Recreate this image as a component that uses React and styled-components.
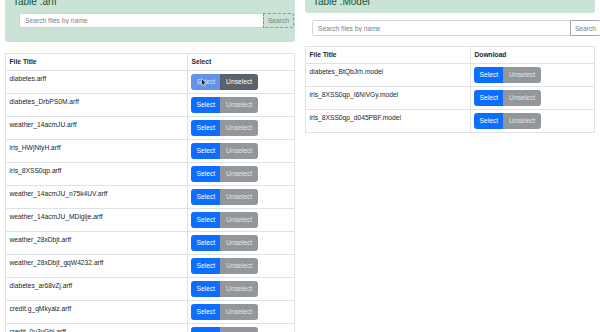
import React from "react";
import styled, { createGlobalStyle } from "styled-components";

const arffFiles = [
  "diabetes.arff",
  "diabetes_DrbPS0M.arff",
  "weather_14acmJU.arff",
  "iris_HWjNtyH.arff",
  "iris_8XSS0qp.arff",
  "weather_14acmJU_n75k4UV.arff",
  "weather_14acmJU_MDiglje.arff",
  "weather_28xDbjt.arff",
  "weather_28xDbjt_gqW4232.arff",
  "diabetes_ar68vZj.arff",
  "credit.g_qMkyalz.arff",
  "credit_0u3vGbj.arff",
  "credit_Kf2sLpa.arff",
];

const modelFiles = [
  "diabetes_BtQbJrh.model",
  "iris_8XSS0qp_I6NiVGy.model",
  "iris_8XSS0qp_d045PBF.model",
];

const Cursor = () => (
  <CursorIcon width="6" height="9" viewBox="0 0 6 9">
    <path d="M0.5 0.5 L0.5 7.5 L2 6 L3.2 8.5 L4.2 8 L3 5.6 L5.3 5.6 Z" fill="#111" stroke="#fff" strokeWidth="0.6" />
  </CursorIcon>
);

const SelectButtons = ({ selected }) => (
  <ButtonGroup>
    <Btn $variant="primary" disabled={selected}>
      Select
    </Btn>
    <Btn $variant="secondary" disabled={!selected}>
      Unselect
    </Btn>
    {selected && <Cursor />}
  </ButtonGroup>
);

const FileTable = ({ files, action, firstWidth, selectedIndex }) => (
  <Table>
    <colgroup>
      <col style={{ width: firstWidth }} />
      <col />
    </colgroup>
    <thead>
      <tr>
        <Th>File Title</Th>
        <Th>{action}</Th>
      </tr>
    </thead>
    <tbody>
      {files.map((f, i) => (
        <tr key={f}>
          <Td>{f}</Td>
          <Td $buttons>
            <SelectButtons selected={i === selectedIndex} />
          </Td>
        </tr>
      ))}
    </tbody>
  </Table>
);

const App = () => {
  return (
    <>
      <GlobalStyle />
      <Page>
        <Column>
          <Banner $pad="4px 1px 14px 8px">
            <Title>Table .arff</Title>
            <SearchGroup $ml="6px" $mt="5px" $h="15px">
              <SearchInput placeholder="Search files by name" />
              <SearchButton $dashed>Search</SearchButton>
            </SearchGroup>
          </Banner>
          <TableWrap $mt="11px">
            <FileTable files={arffFiles} action="Select" firstWidth="182px" selectedIndex={0} />
          </TableWrap>
        </Column>

        <Column>
          <Banner $pad="4px 8px 5px 8px">
            <Title>Table .Model</Title>
          </Banner>
          <SearchGroup $ml="7px" $mt="7px" $mr="-6px" $h="16px">
            <SearchInput placeholder="Search files by name" />
            <SearchButton>Search</SearchButton>
          </SearchGroup>
          <TableWrap $mt="10px">
            <FileTable files={modelFiles} action="Download" firstWidth="165px" selectedIndex={-1} />
          </TableWrap>
        </Column>
      </Page>
    </>
  );
};

export default App;

const GlobalStyle = createGlobalStyle`
  html, body {
    margin: 0;
    padding: 0;
    overflow: hidden;
    background: #fff;
    font-family: "Liberation Sans", Arial, sans-serif;
    color: #212529;
  }
`;

const Page = styled.div`
  display: grid;
  grid-template-columns: 300px 300px;
  margin-top: -8px;
  width: 600px;
`;

const Column = styled.div`
  padding: 0 5px;
  min-width: 0;
  display: flex;
  flex-direction: column;
`;

const Banner = styled.div`
  background: #c9e3d6;
  border-radius: 3px;
  padding: ${(p) => p.$pad};
`;

const Title = styled.h4`
  margin: 0;
  font-size: 10px;
  line-height: 12px;
  font-weight: 400;
  color: #0f5132;
`;

const SearchGroup = styled.div`
  display: flex;
  height: ${(p) => p.$h};
  margin: ${(p) => p.$mt || 0} ${(p) => p.$mr || 0} 0 ${(p) => p.$ml || 0};
`;

const SearchInput = styled.input`
  flex: 1;
  min-width: 0;
  box-sizing: border-box;
  height: 100%;
  border: 1px solid #ced4da;
  border-radius: 2.5px 0 0 2.5px;
  background: #fff;
  padding: 0 5px;
  font-family: inherit;
  font-size: 6.7px;
  color: #212529;
  outline: none;

  &::placeholder {
    color: #7d838a;
  }
`;

const SearchButton = styled.button`
  width: 31px;
  flex: none;
  box-sizing: border-box;
  height: 100%;
  margin-left: -1px;
  padding: 0;
  border: 1px ${(p) => (p.$dashed ? "dashed #8e9893" : "solid #a3a8ac")};
  border-radius: 0 2.5px 2.5px 0;
  background: transparent;
  font-family: inherit;
  font-size: 6.7px;
  color: #7c8288;
`;

const TableWrap = styled.div`
  margin-top: ${(p) => p.$mt};
`;

const Table = styled.table`
  width: 100%;
  box-sizing: border-box;
  border-collapse: collapse;
  table-layout: fixed;
  border: 1px solid #dee2e6;
  font-size: 6.7px;
  line-height: 10px;
`;

const Th = styled.th`
  box-sizing: border-box;
  text-align: left;
  font-weight: 700;
  padding: 3px 3.5px;
  border: 1px solid #dee2e6;
  color: #212529;
`;

const Td = styled.td`
  box-sizing: border-box;
  vertical-align: top;
  padding: ${(p) => (p.$buttons ? "3px 2.5px" : "3px 3.5px")};
  border: 1px solid #dee2e6;
  white-space: nowrap;
  overflow: hidden;
  color: #212529;
`;

const ButtonGroup = styled.div`
  display: inline-flex;
  position: relative;
  vertical-align: top;
`;

const Btn = styled.button`
  box-sizing: border-box;
  height: 16px;
  padding: 0 5px;
  font-family: inherit;
  font-size: 6.7px;
  line-height: 14px;
  cursor: pointer;
  border: 1px solid;
  margin-left: ${(p) => (p.$variant === "secondary" ? "-1px" : "0")};
  border-radius: ${(p) => (p.$variant === "primary" ? "2.5px 0 0 2.5px" : "0 2.5px 2.5px 0")};
  background: ${(p) =>
    p.$variant === "primary"
      ? p.disabled
        ? "#6193e8"
        : "#0d6efd"
      : p.disabled
      ? "#93979b"
      : "#5c636a"};
  border-color: ${(p) =>
    p.$variant === "primary"
      ? p.disabled
        ? "#6193e8"
        : "#0d6efd"
      : p.disabled
      ? "#93979b"
      : "#565e64"};
  color: ${(p) => (p.disabled ? "#e2e5e8" : "#fff")};
`;

const CursorIcon = styled.svg`
  position: absolute;
  left: 10px;
  top: 4px;
  pointer-events: none;
`;
